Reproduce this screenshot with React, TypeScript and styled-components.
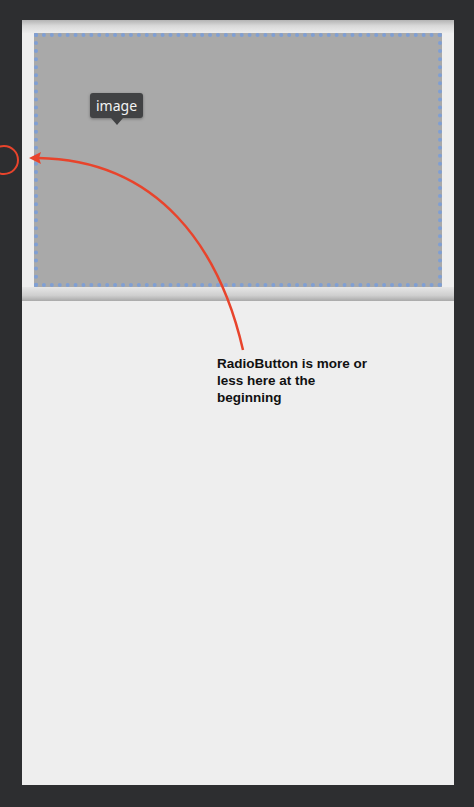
import * as React from 'react';
import styled, { createGlobalStyle } from 'styled-components';

const GlobalStyle = createGlobalStyle`
  html, body {
    margin: 0;
    padding: 0;
    background: #2d2e30;
  }
  body {
    font-family: "Liberation Sans", Arial, sans-serif;
  }
`;

const Stage = styled.div`
  position: relative;
  width: 474px;
  height: 807px;
  overflow: hidden;
  background: #2d2e30;
  padding: 20px 20px 22px 22px;
  box-sizing: border-box;
`;

const Screen = styled.div`
  width: 432px;
  height: 765px;
  background: #eeeeee;
  display: flex;
  flex-direction: column;
`;

const Header = styled.header`
  display: flex;
  flex-direction: column;
  background: #eeeeee;
`;

const Bar = styled.div<{ $flip?: boolean }>`
  height: ${(p) => (p.$flip ? 14 : 13)}px;
  background: ${(p) =>
    p.$flip
      ? 'linear-gradient(to bottom, #e6e6e6 0%, #cfcfcf 60%, #a9a9a9 100%)'
      : 'linear-gradient(to bottom, #b4b4b4 0%, #d9d9d9 45%, #ececec 100%)'};
`;

const ImageWell = styled.div`
  padding: 0 12px 0 12px;
`;

const ImageBox = styled.div`
  position: relative;
  height: 254px;
  background: #a9a9a9;
  border: 4px dotted #7f9fd4;
  box-sizing: border-box;
`;

const Tooltip = styled.div`
  position: absolute;
  left: 52px;
  top: 56px;
  padding: 3px 6px 3px;
  background: #414244;
  color: #f2f2f2;
  font-family: "Noto Sans", "Liberation Sans", sans-serif;
  font-size: 14px;
  line-height: 19px;
  border-radius: 3px;
  box-shadow: 0 1px 3px rgba(0, 0, 0, 0.35);

  &::after {
    content: '';
    position: absolute;
    left: 50%;
    bottom: -7px;
    margin-left: -6px;
    border-left: 6px solid transparent;
    border-right: 6px solid transparent;
    border-top: 7px solid #414244;
  }
`;

const Body = styled.main`
  flex: 1;
  padding: 54px 0 0 195px;
`;

const Note = styled.p`
  margin: 0;
  width: 158px;
  font-family: "Liberation Sans", Arial, sans-serif;
  font-weight: bold;
  font-size: 13.5px;
  line-height: 17px;
  color: #111;
`;

const Overlay = styled.svg`
  position: absolute;
  left: 0;
  top: 0;
  pointer-events: none;
`;

export default function App() {
  return (
    <>
      <GlobalStyle />
      <Stage>
        <Screen>
          <Header>
            <Bar />
            <ImageWell>
              <ImageBox>
                <Tooltip>image</Tooltip>
              </ImageBox>
            </ImageWell>
            <Bar $flip />
          </Header>
          <Body>
            <Note>RadioButton is more or less here at the beginning</Note>
          </Body>
        </Screen>
        <Overlay width={474} height={807} viewBox="0 0 474 807">
          <circle cx={4} cy={160} r={14} fill="none" stroke="#e8442c" strokeWidth={2} />
          <path
            d="M243 350 C 220 250, 160 160, 38 158"
            fill="none"
            stroke="#e8442c"
            strokeWidth={2.5}
          />
          <path d="M29 158 L41 152 L39 158 L41 164 Z" fill="#e8442c" />
        </Overlay>
      </Stage>
    </>
  );
}
